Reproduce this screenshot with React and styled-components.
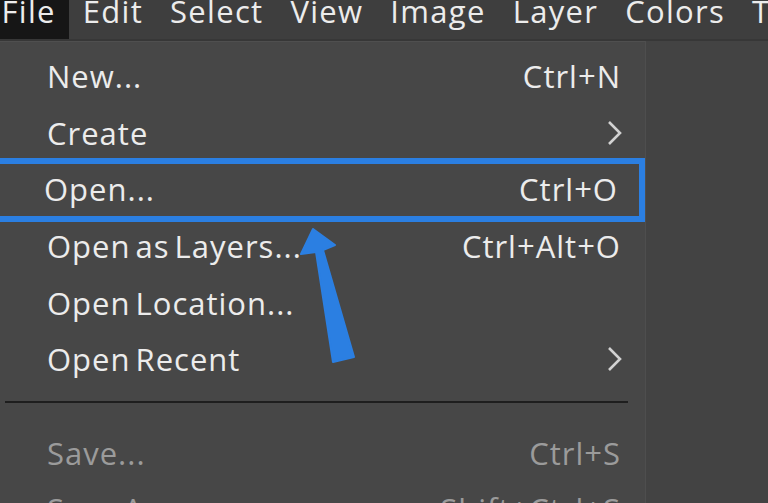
import React from 'react'
import styled, {createGlobalStyle} from 'styled-components'

const GlobalStyle = createGlobalStyle`
  html, body {
    margin: 0;
    padding: 0;
    background: #434343;
    overflow: hidden;
  }
  * {
    box-sizing: border-box;
  }
`

const Screen = styled.div`
  position: relative;
  width: 768px;
  height: 503px;
  overflow: hidden;
  background: #434343;
  font-family: "Open Sans", "Noto Sans", sans-serif;
  font-size: 31px;
  letter-spacing: 1px;
  word-spacing: -4px;
  color: #ececec;
`

const MenuBar = styled.div`
  display: flex;
  height: 41px;
  margin-left: -12px;
  background: #3e3e3e;
  border-bottom: 2px solid #373737;
  white-space: nowrap;
  letter-spacing: 1.3px;
`

const MenuTitle = styled.div`
  padding: 0 13.5px;
  height: 39px;
  line-height: 1;
  background: ${p => (p.$active ? '#161616' : 'transparent')};

  span {
    display: block;
    margin-top: -4px;
  }
`

const Menu = styled.div`
  width: 658px;
  margin-left: -12px;
  padding-top: 6px;
  background: #474747;
  border-top: 1px solid #4f4f4f;
  border-right: 1px solid #4e4e4e;
  min-height: 470px;
`

const Row = styled.div`
  position: relative;
  display: flex;
  align-items: center;
  justify-content: space-between;
  height: 56.6px;
  padding: 0 ${p => (p.$boxed ? '28px' : '25px')} 0 ${p => (p.$boxed ? '56px' : '59px')};
  color: ${p => (p.$disabled ? '#9b9b9b' : '#ececec')};
  white-space: nowrap;

  ${p => p.$boxed && `
    &::after {
      content: '';
      position: absolute;
      top: -3px;
      bottom: -4px;
      left: -20px;
      right: 0;
      border: 6px solid #2b7fe2;
      pointer-events: none;
    }
  `}
`

const Shortcut = styled.span`
  margin-right: -1px;
`

const Chevron = styled.svg`
  width: 16px;
  height: 30px;
  margin-right: -2px;
`

const Separator = styled.div`
  height: 2px;
  margin: 13px 17px 22px;
  background: #1e1e1e;
`

const Overlay = styled.svg`
  position: absolute;
  left: 0;
  top: 0;
  width: 768px;
  height: 503px;
  pointer-events: none;
`

const titles = ['File', 'Edit', 'Select', 'View', 'Image', 'Layer', 'Colors', 'Tools']

const items = [
  {label: 'New...', shortcut: 'Ctrl+N'},
  {label: 'Create', sub: true},
  {label: 'Open...', shortcut: 'Ctrl+O', boxed: true},
  {label: 'Open as Layers...', shortcut: 'Ctrl+Alt+O'},
  {label: 'Open Location...'},
  {label: 'Open Recent', sub: true},
  {separator: true},
  {label: 'Save...', shortcut: 'Ctrl+S', disabled: true},
  {label: 'Save As...', shortcut: 'Shift+Ctrl+S', disabled: true},
]

const SubArrow = () => (
  <Chevron viewBox="0 0 16 30">
    <path d="M3 4 L14 15 L3 26" fill="none" stroke="#d2d2d2" strokeWidth="2.6"/>
  </Chevron>
)

export default function App() {
  return (
    <Screen>
      <GlobalStyle/>
      <MenuBar>
        {titles.map((t, i) => (
          <MenuTitle key={t} $active={i === 0}><span>{t}</span></MenuTitle>
        ))}
      </MenuBar>
      <Menu>
        {items.map((it, i) => it.separator ? <Separator key={i}/> : (
          <Row key={i} $boxed={it.boxed} $disabled={it.disabled}>
            <span>{it.label}</span>
            {it.sub ? <SubArrow/> : <Shortcut>{it.shortcut}</Shortcut>}
          </Row>
        ))}
      </Menu>
      <Overlay viewBox="0 0 768 503">
        <polygon
          points="313,229 335,245 323,250 354,357 333,362 316,252 301,254"
          fill="#2b7fe2"
          stroke="#2b7fe2"
          strokeWidth="2"
          strokeLinejoin="round"
        />
      </Overlay>
    </Screen>
  )
}
